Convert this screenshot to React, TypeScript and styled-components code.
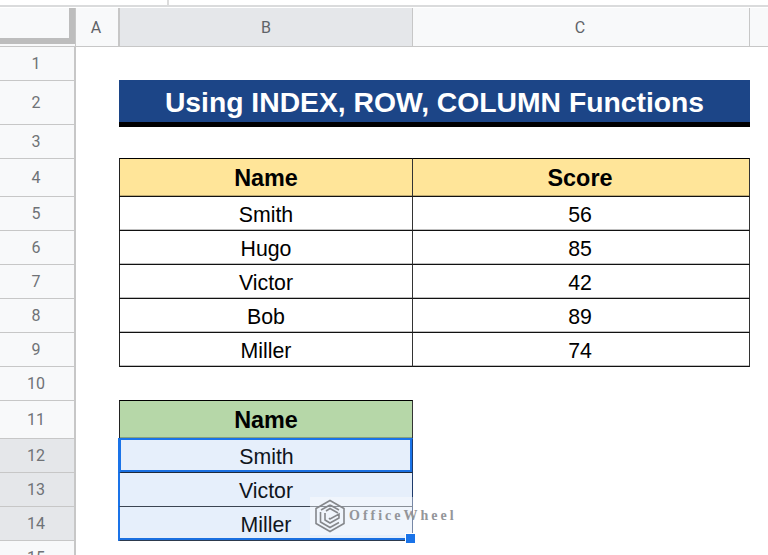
import React from 'react';
import styled, { createGlobalStyle } from 'styled-components';

const SCORES = [
  ['Smith', '56'],
  ['Hugo', '85'],
  ['Victor', '42'],
  ['Bob', '89'],
  ['Miller', '74'],
];
const PICKED = ['Smith', 'Victor', 'Miller'];

const RowHead: React.FC<{ n: number; h: number; active?: boolean }> = ({ n, h, active }) => (
  <RowLabel $h={h} $active={active}>{n}</RowLabel>
);

const Logo = () => (
  <svg width="32" height="34" viewBox="0 0 32 34" fill="none" stroke="#85878b" strokeWidth="1.6">
    <path d="M16 1.5 30 9.5v15L16 32.5 2 24.5v-15z" />
    <path d="M16 6 25 11M7 11l9-5M6.5 13v10l9.500 5.500 9-5" />
    <path d="M11 14v7l5 3 9-5v-4l-9 5-1-1" />
    <path d="M12 12l4-2.500 8 4.500" />
  </svg>
);

export default function App() {
  return (
    <>
      <GlobalStyle />
      <Page>
        <TopStrip />
        <Sheet>
          <Corner />
          <ColLabel $pad={2}>A</ColLabel>
          <ColLabel $active>B</ColLabel>
          <ColLabel $pad={2}>C</ColLabel>
          <ColEnd />

          <RowHead n={1} h={34} />
          <Blank />

          <RowHead n={2} h={44} />
          <Gutter />
          <Title>Using INDEX, ROW, COLUMN Functions</Title>
          <Gutter />

          <RowHead n={3} h={34} />
          <Blank />

          <RowHead n={4} h={38} />
          <Gutter />
          <Cell $bg="#ffe599" $bold $left>Name</Cell>
          <Cell $bg="#ffe599" $bold>Score</Cell>
          <Gutter />

          {SCORES.map(([name, score], i) => (
            <React.Fragment key={name}>
              <RowHead n={5 + i} h={34} />
              <Gutter />
              <Cell $left>{name}</Cell>
              <Cell>{score}</Cell>
              <Gutter />
            </React.Fragment>
          ))}

          <RowHead n={10} h={34} />
          <Blank />

          <RowHead n={11} h={38} />
          <Gutter />
          <Cell $bg="#b6d7a8" $bold $left>Name</Cell>
          <Gutter $wide />

          {PICKED.map((name, i) => (
            <React.Fragment key={name}>
              <RowHead n={12 + i} h={34} active />
              <Gutter />
              <Picked $first={i === 0} $last={i === PICKED.length - 1}>{name}</Picked>
              <Gutter $wide />
            </React.Fragment>
          ))}

          <RowHead n={15} h={34} />
          <Blank />
        </Sheet>
        <Watermark>
          <Logo />
          <Brand>OfficeWheel</Brand>
        </Watermark>
        <Handle />
      </Page>
    </>
  );
}

const GlobalStyle = createGlobalStyle`
  html, body {
    margin: 0;
    background: #fff;
    overflow: hidden;
  }
`;

const Page = styled.div`
  position: relative;
  width: 768px;
  height: 555px;
  overflow: hidden;
  font-family: 'Liberation Sans', Arial, sans-serif;
`;

const TopStrip = styled.div`
  position: relative;
  height: 5px;
  border-bottom: 2px solid #dadbdc;
  background: #fff;

  &::after {
    content: '';
    position: absolute;
    left: 167px;
    top: 0;
    width: 2px;
    height: 5px;
    background: #dcdcdc;
  }
`;

const Sheet = styled.div`
  display: grid;
  grid-template-columns: 76px 43px 294px 337px 18px;
  grid-auto-rows: min-content;
  margin-top: 1px;
`;

const Corner = styled.div`
  height: 39px;
  box-sizing: border-box;
  background: #f8f9fa;
  border-bottom: 1px solid #c7c7c7;
  border-right: 1px solid #c7c7c7;

  &::before {
    content: '';
    display: block;
    height: 36px;
    box-sizing: border-box;
    border-right: 6px solid #bdbdbd;
    border-bottom: 6px solid #bdbdbd;
  }
`;

const ColLabel = styled.div<{ $active?: boolean; $pad?: number }>`
  height: 39px;
  box-sizing: border-box;
  display: flex;
  align-items: center;
  justify-content: center;
  padding-right: ${({ $pad }) => $pad ?? 0}px;
  background: ${({ $active }) => ($active ? '#e5e7ea' : '#f8f9fa')};
  border-right: 1px solid #c7c7c7;
  border-bottom: 1px solid #c7c7c7;
  border-left: ${({ $active }) => ($active ? '1px solid #c7c7c7' : 'none')};
  color: #5f6368;
  font-family: Roboto, sans-serif;
  font-size: 16px;
`;

const ColEnd = styled.div`
  height: 39px;
  box-sizing: border-box;
  background: #f8f9fa;
  border-bottom: 1px solid #c7c7c7;
`;

const RowLabel = styled.div<{ $h: number; $active?: boolean }>`
  height: ${({ $h }) => $h}px;
  box-sizing: border-box;
  display: flex;
  align-items: center;
  justify-content: center;
  padding-right: 2px;
  background: ${({ $active }) => ($active ? '#e5e7ea' : '#f8f9fa')};
  border-right: 2px solid #c7c7c7;
  border-bottom: 1px solid #c7c7c7;
  color: #6f7276;
  font-family: Roboto, sans-serif;
  font-size: 16px;
`;

const Blank = styled.div`
  grid-column: 2 / -1;
`;

const Gutter = styled.div<{ $wide?: boolean }>`
  grid-column: ${({ $wide }) => ($wide ? 'span 2' : 'span 1')};
`;

const Title = styled.div`
  grid-column: span 2;
  height: 47px;
  margin: -1px 0 -2px;
  box-sizing: border-box;
  display: flex;
  align-items: center;
  justify-content: center;
  padding-top: 3px;
  background: #1c4587;
  border-bottom: 5px solid #000;
  color: #fff;
  font-size: 28.3px;
  font-weight: 700;
`;

const Cell = styled.div<{ $bg?: string; $bold?: boolean; $left?: boolean }>`
  box-sizing: border-box;
  display: flex;
  align-items: center;
  justify-content: center;
  height: ${({ $bold }) => ($bold ? 39 : 34)}px;
  margin-top: ${({ $bold }) => ($bold ? -1 : 0)}px;
  padding: ${({ $bold }) => ($bold ? 1 : 3)}px ${({ $left }) => ($left ? 0 : 2)}px 0 0;
  background: ${({ $bg }) => $bg ?? '#fff'};
  border-right: 1px solid #333;
  border-bottom: 1px solid #111;
  border-top: ${({ $bold }) => ($bold ? '1px solid #000' : 'none')};
  border-left: ${({ $left }) => ($left ? '1px solid #222' : 'none')};
  box-shadow: inset 0 -1px 0 rgba(0, 0, 0, 0.25);
  color: #000;
  font-size: ${({ $bold }) => ($bold ? 23.4 : 21.3)}px;
  font-weight: ${({ $bold }) => ($bold ? 700 : 400)};
`;

const Picked = styled.div<{ $first?: boolean; $last?: boolean }>`
  box-sizing: border-box;
  display: flex;
  align-items: center;
  justify-content: center;
  height: ${({ $first }) => ($first ? 35 : 34)}px;
  margin-top: ${({ $first }) => ($first ? -1 : 0)}px;
  padding-top: ${({ $first }) => ($first ? 2 : 3)}px;
  background: #e6effb;
  border-left: 1px solid #1a73e8;
  border-right: 1px solid #1d3a6b;
  border-bottom: 1px solid #3b4552;
  color: #10151c;
  font-size: 21.3px;
  box-shadow: -1px 0 0 #1a73e8;
  ${({ $first }) =>
    $first &&
    `
    border: 2px solid #1a73e8;
    border-right: 1px solid #1d3a6b;
    border-bottom: 1px solid #1f2a3a;
    box-shadow: inset 0 -2px 0 #1a6fe0, inset -2px 0 0 #1a73e8, -1px 0 0 #1a73e8;
  `}
  ${({ $last }) =>
    $last &&
    `
    border-bottom: 1px solid #2d3a4d;
    box-shadow: inset 0 -2px 0 #1a6fe0, -1px 0 0 #1a73e8;
  `}
`;

const Watermark = styled.div`
  position: absolute;
  left: 310px;
  top: 497px;
  width: 148px;
  height: 38px;
  display: flex;
  align-items: center;
  gap: 3px;
  padding-left: 4px;
  box-sizing: border-box;
  background: rgba(255, 255, 255, 0.4);
`;

const Brand = styled.span`
  font-family: 'Liberation Serif', serif;
  font-size: 14px;
  font-weight: 700;
  letter-spacing: 3px;
  white-space: nowrap;
  color: #94969a;
`;

const Handle = styled.div`
  position: absolute;
  left: 405px;
  top: 533px;
  width: 9px;
  height: 9px;
  background: #1a73e8;
  border: 1px solid #fff;
`;
